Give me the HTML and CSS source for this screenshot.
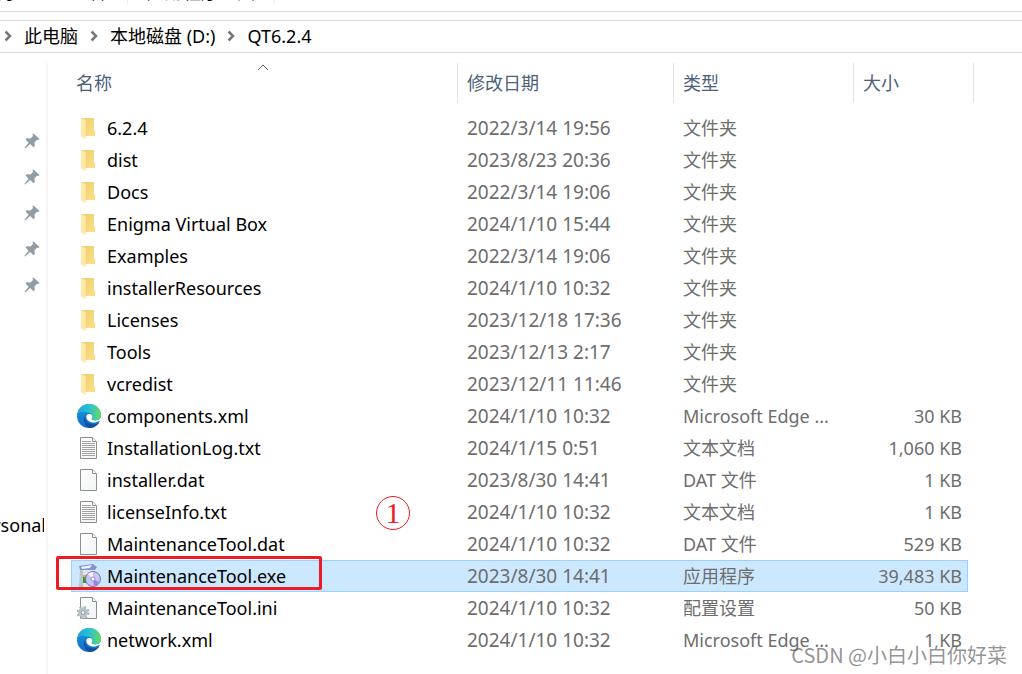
FILE: index.html
```html
<!DOCTYPE html>
<html lang="zh-CN">
  <head>
    <meta charset="utf-8">
    <meta name="viewport" content="width=device-width">
    <title>QT6.2.4</title>
    <link rel="stylesheet" href="styles.css">
  </head>
  <body>
    <svg class="sprite" aria-hidden="true">
      <defs>
        <linearGradient id="fold-back" x1="0" y1="0" x2="1" y2="1">
          <stop offset="0" stop-color="#eccb6c"/>
          <stop offset="1" stop-color="#ffe08a"/>
        </linearGradient>
        <linearGradient id="paper" x1="0" y1="0" x2="1" y2="1">
          <stop offset="0" stop-color="#ffffff"/>
          <stop offset="1" stop-color="#f1f4f5"/>
        </linearGradient>
        <linearGradient id="edge-top" x1="0" y1="0" x2="1" y2="0">
          <stop offset="0" stop-color="#1ba5e2"/>
          <stop offset="0.5" stop-color="#2cc0cf"/>
          <stop offset="1" stop-color="#63dc5a"/>
        </linearGradient>
        <linearGradient id="edge-mid" x1="0" y1="0" x2="0" y2="1">
          <stop offset="0" stop-color="#1a9be0"/>
          <stop offset="1" stop-color="#0f6cc8"/>
        </linearGradient>
      </defs>
      <symbol id="folder" viewBox="0 0 24 24">
        <path d="M4 2h13v12l1 1v5H4z" fill="url(#fold-back)"/>
        <path d="M4 2l5 2v18.500l-1 .5-4-3z" fill="#ffe9a6"/>
        <path d="M9 4v16" stroke="#f3d683"/>
      </symbol>
      <symbol id="blank" viewBox="0 0 24 24">
        <path d="M3.500 1.500h12l4 4v17h-16z" fill="url(#paper)" stroke="#8e8e8e"/>
        <path d="M15.500 1.500v4h4" fill="#fff" stroke="#8e8e8e"/>
      </symbol>
      <symbol id="text" viewBox="0 0 24 24">
        <path d="M3.500 1.500h12l4 4v17h-16z" fill="url(#paper)" stroke="#8e8e8e"/>
        <path d="M15.500 1.500v4h4" fill="#fff" stroke="#8e8e8e"/>
        <path d="M5 5.500h9M5 7.500h13M5 9.500h13M5 11.500h13M5 13.500h13M5 15.500h13M5 17.500h13M5 19.500h13" stroke="#a2a2a2"/>
      </symbol>
      <symbol id="config" viewBox="0 0 24 24">
        <path d="M3.500 1.500h12l4 4v17h-16z" fill="url(#paper)" stroke="#8e8e8e"/>
        <path d="M15.500 1.500v4h4" fill="#fff" stroke="#8e8e8e"/>
        <circle cx="6" cy="16.500" r="5.500" fill="none" stroke="#a9b6be" stroke-width="2" stroke-dasharray="2.300 2.020"/>
        <circle cx="6" cy="16.500" r="3.500" fill="#eef2f4" stroke="#b7c2c9" stroke-width="3"/>
        <circle cx="6" cy="16.500" r="1.800" fill="#fff" stroke="#8d9aa3"/>
      </symbol>
      <symbol id="edge" viewBox="0 0 24 24">
        <circle cx="12" cy="12" r="12" fill="url(#edge-mid)"/>
        <path d="M.5 10C1.500 4 6 0 12 0c7 0 12 5 12 10.500 0 4-3 6-6.500 6-2.500 0-3.500-1-2.500-2.500 1.500-2.500-.5-5.500-4-5.500C6 7 2 7.500.5 10z" fill="url(#edge-top)"/>
        <path d="M9 11c-1.500 3-.5 7 3 8.500 4 1.800 7.500 1 10-1C19.500 22.500 16 24 12.500 24 9 22.500 7 19 7 16c0-2.200.8-4 2-5z" fill="#124f9b"/>
        <path d="M9.500 11.500c-1 3 1.500 6.500 6 7 3 .4 5-.4 6.500-1.400.5-.2 1 0 .8.400L24 20V12.500c-1 3-3.500 4-6.500 4-2.500 0-3.500-1-2.500-2.500.8-1.500.2-3-1-3.700-1.500-.8-3.700-.3-4.500 1.200z" fill="#fff"/>
      </symbol>
      <symbol id="setup" viewBox="0 0 24 24">
        <path d="M3 2l14-2 3 3v17l-4 3H3z" fill="#dfe5ee"/>
        <path d="M2 2l14-2 4 3-2 3H3z" fill="#8095d0"/>
        <path d="M4 3l11-2-2 3-8 1z" fill="#eef3ff"/>
        <path d="M3 6h3v17H2z" fill="#b9c3d0"/>
        <path d="M6 11h6v8H6z" fill="#e9a93c"/>
        <path d="M6 13h4v6H6z" fill="#2d9b39"/>
        <circle cx="16" cy="15" r="7.500" fill="#c9c5f2" stroke="#7776b4"/>
        <path d="M16 15l-5-5a7 7 0 0 1 5-2z" fill="#f3f0ff"/>
        <path d="M16 15l6 3a7 7 0 0 1-5 4z" fill="#9c82e4"/>
        <circle cx="16" cy="15" r="2" fill="#fff" stroke="#8d8cc6"/>
      </symbol>
      <symbol id="pin" viewBox="0 0 16 16">
        <path d="M9.500.5l6 5.500-1 1-1.500-.3-2.500 2.600.3 3.700-1.300 1.300-3.300-3.200L1 15.500.3 15l4.300-5.300L1.500 6.500l1.300-1.200 3.700.3L9 3 8.500 1.500z" fill="#919ca5"/>
      </symbol>
      <symbol id="chevron" viewBox="0 0 8 12">
        <path d="M1.500 1.500L6 6l-4.500 4.500" fill="none" stroke="#777" stroke-width="2.500"/>
      </symbol>
    </svg>

    <div class="ribbon">
      <span class="tab">共享</span>
      <span class="tab">查看</span>
      <span class="tab tool">应用程序工具</span>
    </div>
    <nav class="address">
      <svg class="chevron"><use href="#chevron"/></svg>
      <a href="#">此电脑</a>
      <svg class="chevron"><use href="#chevron"/></svg>
      <a href="#">本地磁盘 (D:)</a>
      <svg class="chevron"><use href="#chevron"/></svg>
      <a href="#">QT6.2.4</a>
    </nav>

    <div class="explorer">
      <aside class="sidebar">
        <div class="pins">
          <svg class="pin"><use href="#pin"/></svg>
          <svg class="pin"><use href="#pin"/></svg>
          <svg class="pin"><use href="#pin"/></svg>
          <svg class="pin"><use href="#pin"/></svg>
          <svg class="pin"><use href="#pin"/></svg>
        </div>
        <div class="drive"><span>rsonal</span></div>
      </aside>

      <main class="files">
        <table>
          <colgroup>
            <col class="col-name"><col class="col-date"><col class="col-type"><col class="col-size"><col class="col-end">
          </colgroup>
          <thead>
            <tr>
              <th>名称<svg class="sort" viewBox="0 0 12 7"><path d="M1 6l5-5 5 5" fill="none" stroke="#666"/></svg></th>
              <th>修改日期</th><th>类型</th><th colspan="2">大小</th>
            </tr>
          </thead>
          <tbody>
            <tr><td><svg class="icon"><use href="#folder"/></svg>6.2.4</td><td class="date">2022/3/14 19:56</td><td>文件夹</td><td class="size"></td></tr>
            <tr><td><svg class="icon"><use href="#folder"/></svg>dist</td><td class="date">2023/8/23 20:36</td><td>文件夹</td><td class="size"></td></tr>
            <tr><td><svg class="icon"><use href="#folder"/></svg>Docs</td><td class="date">2022/3/14 19:06</td><td>文件夹</td><td class="size"></td></tr>
            <tr><td><svg class="icon"><use href="#folder"/></svg>Enigma Virtual Box</td><td class="date">2024/1/10 15:44</td><td>文件夹</td><td class="size"></td></tr>
            <tr><td><svg class="icon"><use href="#folder"/></svg>Examples</td><td class="date">2022/3/14 19:06</td><td>文件夹</td><td class="size"></td></tr>
            <tr><td><svg class="icon"><use href="#folder"/></svg>installerResources</td><td class="date">2024/1/10 10:32</td><td>文件夹</td><td class="size"></td></tr>
            <tr><td><svg class="icon"><use href="#folder"/></svg>Licenses</td><td class="date">2023/12/18 17:36</td><td>文件夹</td><td class="size"></td></tr>
            <tr><td><svg class="icon"><use href="#folder"/></svg>Tools</td><td class="date">2023/12/13 2:17</td><td>文件夹</td><td class="size"></td></tr>
            <tr><td><svg class="icon"><use href="#folder"/></svg>vcredist</td><td class="date">2023/12/11 11:46</td><td>文件夹</td><td class="size"></td></tr>
            <tr><td><svg class="icon"><use href="#edge"/></svg>components.xml</td><td class="date">2024/1/10 10:32</td><td>Microsoft Edge ...</td><td class="size">30 KB</td></tr>
            <tr><td><svg class="icon"><use href="#text"/></svg>InstallationLog.txt</td><td class="date">2024/1/15 0:51</td><td>文本文档</td><td class="size">1,060 KB</td></tr>
            <tr><td><svg class="icon"><use href="#blank"/></svg>installer.dat</td><td class="date">2023/8/30 14:41</td><td>DAT 文件</td><td class="size">1 KB</td></tr>
            <tr><td><svg class="icon"><use href="#text"/></svg>licenseInfo.txt</td><td class="date">2024/1/10 10:32</td><td>文本文档</td><td class="size">1 KB</td></tr>
            <tr><td><svg class="icon"><use href="#blank"/></svg>MaintenanceTool.dat</td><td class="date">2024/1/10 10:32</td><td>DAT 文件</td><td class="size">529 KB</td></tr>
            <tr class="selected"><td><svg class="icon"><use href="#setup"/></svg>MaintenanceTool.exe<span class="marker"></span><span class="step">1</span></td><td class="date">2023/8/30 14:41</td><td>应用程序</td><td class="size">39,483 KB</td></tr>
            <tr><td><svg class="icon"><use href="#config"/></svg>MaintenanceTool.ini</td><td class="date">2024/1/10 10:32</td><td>配置设置</td><td class="size">50 KB</td></tr>
            <tr><td><svg class="icon"><use href="#edge"/></svg>network.xml</td><td class="date">2024/1/10 10:32</td><td>Microsoft Edge ...</td><td class="size">1 KB</td></tr>
          </tbody>
        </table>
      </main>
    </div>
    <div class="watermark">CSDN @小白小白你好菜</div>
  </body>
</html>
```
FILE: styles.css
```css
* {
  box-sizing: border-box;
}
body {
  margin: 0;
  min-height: 100vh;
  display: flex;
  flex-direction: column;
  position: relative;
  overflow: hidden;
  background: #fff;
  color: #000;
  font-family: "Noto Sans", "Noto Sans CJK SC", sans-serif;
  font-size: 18px;
  line-height: 24px;
}
.sprite {
  position: absolute;
  width: 0;
  height: 0;
}
/* only the feet of the tabs stay in view */
.ribbon {
  height: 12px;
  display: flex;
  align-items: flex-end;
  padding-bottom: 7px;
  border-bottom: 1px solid #dadada;
  overflow: hidden;
}
.tab {
  flex: none;
  margin-left: -16px;
}
.tab + .tab {
  margin-left: 50px;
}
.tab + .tool {
  margin-left: 21px;
  padding: 0 19px;
  border: solid #eee;
  border-width: 0 1px;
}
.address {
  display: flex;
  align-items: center;
  height: 33px;
  margin-top: 8px;
  padding: 0 0 1px 4px;
  border-top: 1px solid #d9d9d9;
  border-bottom: 1px solid #d9d9d9;
}
.address a {
  color: #000;
  text-decoration: none;
  margin: 0 12px;
}
.chevron {
  width: 8px;
  height: 12px;
}
.explorer {
  display: flex;
  flex: 1;
  padding-top: 10px;
}
.sidebar {
  width: 48px;
  border-right: 2px solid #f5f5f5;
  overflow: hidden;
}
.pins {
  display: flex;
  flex-direction: column;
  gap: 20px;
  padding: 70px 0 0 24px;
}
.pin {
  width: 16px;
  height: 16px;
}
.drive {
  display: flex;
  justify-content: flex-end;
  width: 44px;
  margin-top: 220px;
  white-space: nowrap;
  overflow: hidden;
}
.drive span {
  margin-right: -2px;
}
.files {
  flex: 1;
  padding-left: 23px;
}
table {
  width: 903px;
  table-layout: fixed;
  border-collapse: separate;
  border-spacing: 0;
}
.col-name {
  width: 387px;
}
.col-date {
  width: 216px;
}
.col-type {
  width: 180px;
}
.col-end {
  width: 6px;
}
th {
  position: relative;
  height: 40px;
  padding: 0 0 0 9px;
  border-right: 1px solid #e2e2e2;
  color: #4c607a;
  font-weight: normal;
  text-align: left;
}
th:first-child {
  padding-left: 5px;
}
.sort {
  position: absolute;
  left: 186px;
  top: 1px;
  width: 12px;
  height: 7px;
}
tbody::before {
  content: "";
  display: block;
  height: 9px;
}
td {
  position: relative;
  height: 32px;
  padding: 0 0 0 9px;
  color: #6d6d6d;
  white-space: nowrap;
}
td:first-child {
  padding-left: 6px;
  color: #000;
}
.date {
  font-size: 19px;
}
td.size {
  padding-right: 6px;
  text-align: right;
}
.icon {
  width: 24px;
  height: 24px;
  margin-right: 6px;
  vertical-align: -5px;
  overflow: visible;
}
.selected td {
  background: #cce8ff;
  border: solid #99d1ff;
  border-width: 1px 0;
}
.selected td:first-child {
  border-left-width: 1px;
  padding-left: 5px;
}
.selected td.size {
  border-right-width: 1px;
  padding-right: 5px;
}
.marker {
  position: absolute;
  left: -16px;
  top: -5px;
  width: 266px;
  height: 34px;
  border: 3px solid #ed1c24;
  border-radius: 2px;
}
.step {
  position: absolute;
  left: 304px;
  top: -65px;
  width: 34px;
  height: 34px;
  border: 1px solid #ed1c24;
  border-radius: 50%;
  color: #ed1c24;
  font-family: "Liberation Serif", serif;
  font-size: 30px;
  line-height: 32px;
  text-align: center;
}
.watermark {
  position: absolute;
  right: 15px;
  bottom: 7px;
  color: rgba(100, 100, 100, 0.7);
  font-family: "Noto Sans CJK SC", sans-serif;
  font-size: 20px;
}
```
